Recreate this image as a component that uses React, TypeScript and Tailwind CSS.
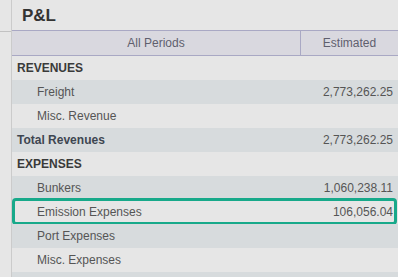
import React from "react"

type Row = {
  label: string
  value?: string
  kind: "section" | "item" | "total"
  highlight?: boolean
}

const rows: Row[] = [
  { label: "REVENUES", kind: "section" },
  { label: "Freight", value: "2,773,262.25", kind: "item" },
  { label: "Misc. Revenue", kind: "item" },
  { label: "Total Revenues", value: "2,773,262.25", kind: "total" },
  { label: "EXPENSES", kind: "section" },
  { label: "Bunkers", value: "1,060,238.11", kind: "item" },
  { label: "Emission Expenses", value: "106,056.04", kind: "item", highlight: true },
  { label: "Port Expenses", kind: "item" },
  { label: "Misc. Expenses", kind: "item" },
  { label: "", kind: "item" },
]

export default function App() {
  return (
    <div
      className="flex h-[277px] w-[398px] overflow-hidden bg-[#e6e6e6] text-[12px]"
      style={{ fontFamily: '"Liberation Sans", Arial, sans-serif' }}
    >
      {/* side strip */}
      <div className="w-[12px] shrink-0 border-r border-[#cbcbcb]">
        <div className="h-[32px] border-b border-[#c2c2c2]" />
      </div>

      <div className="flex min-w-0 flex-1 flex-col">
        <div className="flex h-[30px] shrink-0 items-center px-[10px] pt-[1px] text-[17px] font-bold text-[#333333]">
          P&amp;L
        </div>

        <div className="flex h-[26px] shrink-0 border-y border-[#a9a8c4] bg-[#d9d8df] text-[#5f5f6e]">
          <div className="flex w-[288px] items-center justify-center">All Periods</div>
          <div className="flex flex-1 items-center justify-center border-l border-[#a9a8c4]">Estimated</div>
        </div>

        {rows.map((row, i) => (
          <div
            key={i}
            className={`relative flex h-6 shrink-0 items-center ${
              i % 2 === 1 ? "bg-[#d7dbdd]" : "bg-[#e6e6e6]"
            }`}
          >
            <div
              className={`w-[288px] ${
                row.kind === "item"
                  ? "pl-[25px] text-[#555555]"
                  : row.kind === "total"
                  ? "pl-[5px] font-bold text-[#3e4651]"
                  : "pl-[5px] font-bold text-[#3a3a3a]"
              }`}
            >
              {row.label}
            </div>
            <div className="flex-1 pr-[5px] text-right text-[#555555]">{row.value}</div>
            {row.highlight && (
              <div className="absolute -top-[2px] -bottom-[1px] left-0 right-[1px] rounded-[4px] border-[3px] border-[#17a98a]" />
            )}
          </div>
        ))}
      </div>
    </div>
  )
}
